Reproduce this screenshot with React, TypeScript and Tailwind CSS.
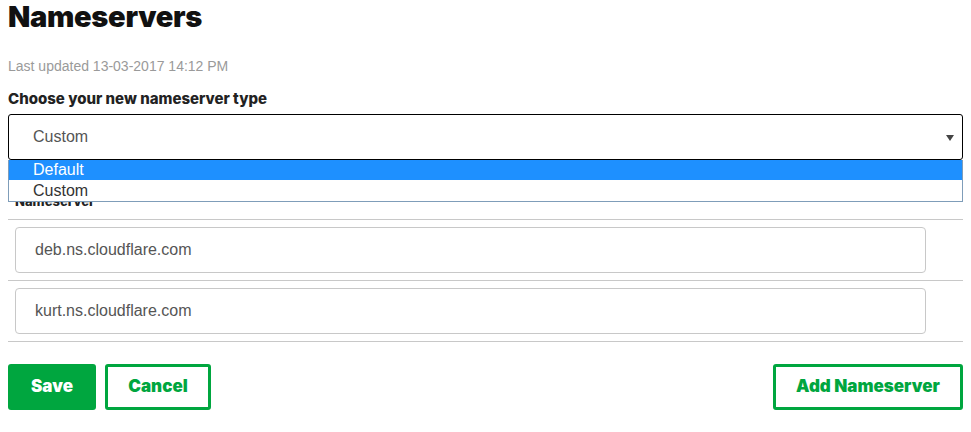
export default function App() {
  const servers = ['deb.ns.cloudflare.com', 'kurt.ns.cloudflare.com'];

  return (
    <div className="min-h-screen bg-white px-2 font-['Inter',sans-serif] text-[#111]">
      <h1 className="pt-[1px] text-[29px] leading-[32px] font-black tracking-[-0.3px]">Nameservers</h1>
      <p className="mt-[25px] font-['Liberation_Sans',Arial,sans-serif] text-[14px] leading-[16px] text-[#9a9a9a]">
        Last updated 13-03-2017 14:12 PM
      </p>
      <p className="mt-[16px] text-[15px] leading-[18px] font-extrabold text-[#222]">
        Choose your new nameserver type
      </p>

      <div className="relative mt-[6px]">
        <div className="flex h-[46px] items-center justify-between rounded-[3px] border border-black pr-[8px] pl-[24px] font-['Liberation_Sans',Arial,sans-serif] text-[16px] text-[#555]">
          <span>Custom</span>
          <svg width="8" height="6" viewBox="0 0 8 6" className="mt-[2px]">
            <path d="M0 0h8L4 6z" fill="#444" />
          </svg>
        </div>
        <ul className="absolute top-full right-0 left-0 z-10 border-x border-b border-[#7f9db9] bg-white font-['Liberation_Sans',Arial,sans-serif] text-[16px]">
          <li className="h-[20px] bg-[#1e90ff] pl-[24px] leading-[20px] text-white">Default</li>
          <li className="h-[21px] pl-[24px] leading-[21px] text-[#333]">Custom</li>
        </ul>
      </div>

      <div className="border-b border-[#c8c8c8] pt-[33px] pb-[10px] pl-[7px] text-[13px] leading-[16px] font-extrabold text-[#222]">
        Nameserver
      </div>
      {servers.map((s) => (
        <div key={s} className="border-b border-[#c8c8c8] py-[7px] pl-[7px]">
          <div className="flex h-[46px] w-[911px] items-center rounded-[4px] border border-[#c8c8c8] pl-[19px] font-['Liberation_Sans',Arial,sans-serif] text-[16px] text-[#555]">
            {s}
          </div>
        </div>
      ))}

      <div className="mt-[22px] flex items-center justify-between">
        <div className="flex gap-[9px]">
          <button className="h-[46px] w-[88px] rounded-[3px] bg-[#00a63f] text-[17px] font-black text-white">
            Save
          </button>
          <button className="h-[46px] w-[106px] rounded-[3px] border-[3px] border-[#00a63f] bg-white text-[17px] font-black text-[#00a63f]">
            Cancel
          </button>
        </div>
        <button className="h-[46px] w-[190px] rounded-[3px] border-[3px] border-[#00a63f] bg-white text-[17px] font-black text-[#00a63f]">
          Add Nameserver
        </button>
      </div>
    </div>
  );
}
